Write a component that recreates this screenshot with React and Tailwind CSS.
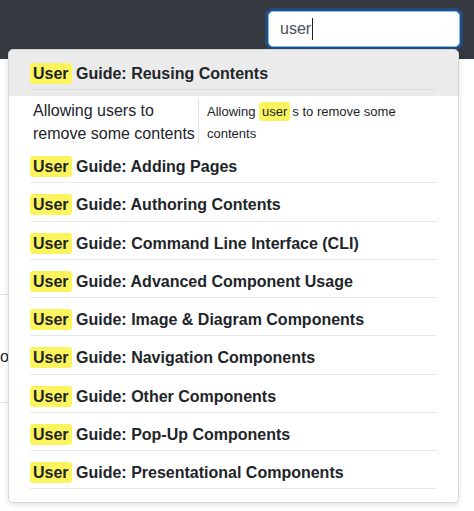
import React from 'react';

const results = [
  'Adding Pages',
  'Authoring Contents',
  'Command Line Interface (CLI)',
  'Advanced Component Usage',
  'Image & Diagram Components',
  'Navigation Components',
  'Other Components',
  'Pop-Up Components',
  'Presentational Components',
];

const Mark = ({ children, small }) => (
  <mark
    className={
      small
        ? 'bg-[#fbf45c] text-[#212529] rounded-[3px] px-[3px] py-[2px] mr-[2px]'
        : 'bg-[#fbf45c] text-[#212529] rounded-[3px] px-[3px] py-[2px]'
    }
  >
    {children}
  </mark>
);

const Header = ({ title }) => (
  <div className="leading-[24px] text-[16px] font-bold text-[#212529] whitespace-nowrap">
    <Mark>User</Mark> Guide: {title}
  </div>
);

const App = () => {
  return (
    <div className="relative w-[474px] h-[511px] overflow-hidden bg-white font-['Liberation_Sans',Arial,sans-serif]">
      {/* navbar */}
      <div className="h-[59px] bg-[#343a40] flex justify-end pt-[11px] pr-[14px]">
        <div className="w-[192px] h-[36px] bg-white rounded-[5px] border border-[#80bdff] shadow-[0_0_0_3px_rgba(0,123,255,0.3)] flex items-center pl-[11px]">
          <span className="text-[16px] text-[#495057]">user</span>
          <span className="w-px h-[22px] bg-[#222] ml-[1px]" />
        </div>
      </div>

      {/* page behind */}
      <div className="flex">
        <div className="w-[187px] border-r border-[#dee2e6]">
          <div className="h-[236px] border-b border-[#dee2e6]" />
          <div className="h-[108px] border-b border-[#dee2e6] pt-[50px] pl-0 text-[16px] leading-[24px] text-[#212529]">
            o
          </div>
        </div>
        <div className="flex-1" />
      </div>

      {/* search dropdown */}
      <div className="absolute left-[8px] top-[49px] w-[451px] bg-white border border-[#d6d6d6] rounded-[5px] shadow-[0_2px_6px_rgba(0,0,0,0.12)] pb-[13px]">
        <div className="bg-[#ebebeb] pt-[12px] pb-[6px] px-[21px] rounded-t-[4px]">
          <div className="pb-[3px] border-b border-[#dcdcdc]">
            <Header title="Reusing Contents" />
          </div>
        </div>

        <div className="px-[21px] pt-[3px] flex">
          <div className="w-[168px] pl-[3px] text-[16px] leading-[23px] text-[#212529]">
            Allowing users to remove some contents
          </div>
          <div className="w-[210px] border-l border-[#e3e3e3] pl-[8px] pt-[2px] text-[13px] leading-[22px] text-[#212529]">
            Allowing <Mark small>user</Mark>s to remove some contents
          </div>
        </div>

        {results.map((title) => (
          <div key={title} className="px-[21px]">
            <div className="pt-[10px] pb-[3.25px] border-b border-[#e8e8e8]">
              <Header title={title} />
            </div>
          </div>
        ))}
      </div>
    </div>
  );
};

export default App;
